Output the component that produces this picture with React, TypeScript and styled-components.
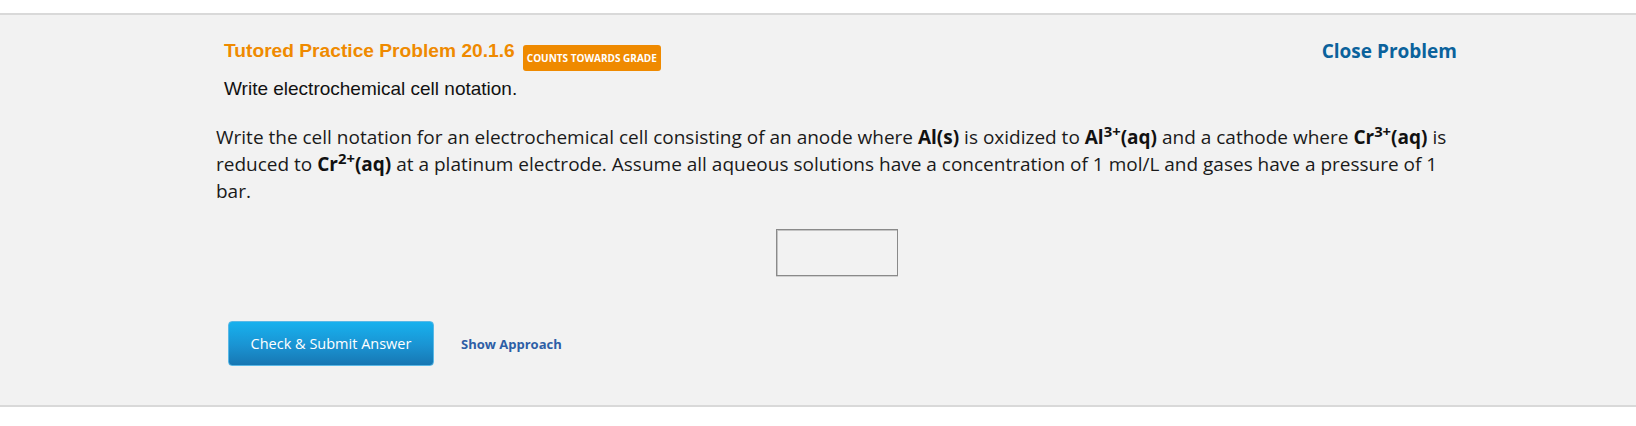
import React from "react";
import styled, { createGlobalStyle } from "styled-components";

const GlobalStyle = createGlobalStyle`
  body {
    margin: 0;
    background: #ffffff;
    font-family: "Open Sans", "Liberation Sans", sans-serif;
  }
`;

const Page = styled.div`
  padding-top: 13px;
  width: 1636px;
`;

const Panel = styled.section`
  background: #f2f2f2;
  border-top: 2px solid #d9d9d9;
  border-bottom: 2px solid #d9d9d9;
  padding: 26px 0 39px 216px;
`;

const Content = styled.div`
  width: 1241px;
`;

const Header = styled.div`
  display: flex;
  justify-content: space-between;
  align-items: flex-start;
`;

const TitleGroup = styled.div`
  display: flex;
  align-items: flex-start;
  gap: 8px;
  padding-left: 8px;
`;

const Title = styled.h1`
  margin: 0;
  font-family: "Liberation Sans", Arial, sans-serif;
  font-size: 19.2px;
  line-height: 20px;
  font-weight: bold;
  color: #ef8a00;
`;

const Badge = styled.span`
  margin-top: 4px;
  height: 26px;
  line-height: 26px;
  padding: 0 4px;
  border-radius: 3px;
  background: #ef8a00;
  color: #ffffff;
  font-family: "Open Sans", sans-serif;
  font-size: 10px;
  font-weight: 700;
  text-transform: uppercase;
  white-space: nowrap;
`;

const CloseLink = styled.a`
  font-family: "Open Sans", sans-serif;
  font-size: 19px;
  line-height: 20px;
  font-weight: 700;
  color: #0b629c;
  text-decoration: none;
  cursor: pointer;
`;

const Subtitle = styled.p`
  margin: 8px 0 0 8px;
  font-family: "Liberation Sans", Arial, sans-serif;
  font-size: 19px;
  line-height: 20px;
  color: #111111;
`;

const Question = styled.p`
  margin: 25px 0 0;
  font-family: "Open Sans", sans-serif;
  font-size: 19px;
  line-height: 27px;
  color: #1a1a1a;

  b {
    font-weight: 700;
    color: #111;
  }

  sup {
    font-size: 0.78em;
    line-height: 0;
    vertical-align: 0.5em;
  }
`;

const AnswerRow = styled.div`
  display: flex;
  justify-content: center;
  margin-top: 24px;
`;

const AnswerBox = styled.input`
  box-sizing: border-box;
  width: 122px;
  height: 47px;
  margin: 0;
  border: 1px solid #8a8a8a;
  background: #f2f2f2;
  box-shadow: inset 1px 1px 0 #c4c4c4, 0 1px 0 #d0d0d0;
  outline: none;
`;

const Actions = styled.div`
  display: flex;
  align-items: center;
  gap: 27px;
  margin-top: 45px;
  padding-left: 12px;
`;

const SubmitButton = styled.button`
  box-sizing: border-box;
  width: 206px;
  height: 45px;
  border: 1px solid #5ab8e6;
  border-radius: 4px;
  background: linear-gradient(to bottom, #17b1ee 0%, #1a93d2 55%, #1777b3 100%);
  color: #ffffff;
  font-family: "Open Sans", sans-serif;
  font-size: 14.5px;
  cursor: pointer;
`;

const ApproachLink = styled.a`
  font-family: "Open Sans", sans-serif;
  font-size: 13px;
  font-weight: 700;
  color: #2d5ea6;
  text-decoration: none;
  cursor: pointer;
`;

export default function App() {
  return (
    <Page>
      <GlobalStyle />
      <Panel>
        <Content>
          <Header>
            <TitleGroup>
              <Title>Tutored Practice Problem 20.1.6</Title>
              <Badge>Counts towards grade</Badge>
            </TitleGroup>
            <CloseLink>Close Problem</CloseLink>
          </Header>
          <Subtitle>Write electrochemical cell notation.</Subtitle>
          <Question>
            Write the cell notation for an electrochemical cell consisting of an
            anode where <b>Al(s)</b> is oxidized to{" "}
            <b>
              Al<sup>3+</sup>(aq)
            </b>{" "}
            and a cathode where{" "}
            <b>
              Cr<sup>3+</sup>(aq)
            </b>{" "}
            is reduced to{" "}
            <b>
              Cr<sup>2+</sup>(aq)
            </b>{" "}
            at a platinum electrode. Assume all aqueous solutions have a
            concentration of 1 mol/L and gases have a pressure of 1 bar.
          </Question>
          <AnswerRow>
            <AnswerBox type="text" aria-label="answer" />
          </AnswerRow>
          <Actions>
            <SubmitButton>Check &amp; Submit Answer</SubmitButton>
            <ApproachLink>Show Approach</ApproachLink>
          </Actions>
        </Content>
      </Panel>
    </Page>
  );
}
